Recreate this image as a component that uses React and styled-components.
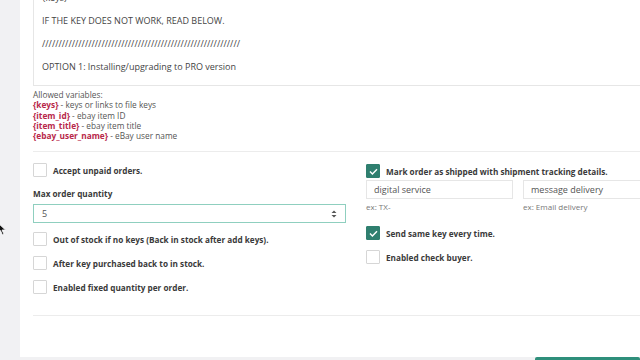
import React from 'react'
import styled, { createGlobalStyle } from 'styled-components'

const GlobalStyle = createGlobalStyle`
  html, body {
    margin: 0;
    padding: 0;
    overflow: hidden;
    background: #f1f1f3;
    font-family: "Open Sans", "Liberation Sans", sans-serif;
  }
`

const Page = styled.div`
  position: relative;
  width: 640px;
  height: 360px;
  overflow: hidden;
  padding-left: 20px;
  box-sizing: border-box;
`

const Panel = styled.div`
  width: 680px;
  height: 357px;
  background: #fff;
  padding: 0 0 0 13px;
  box-sizing: border-box;
  overflow: hidden;
`

const Footer = styled.div`
  display: flex;
  padding-left: 515px;
`

const SaveButton = styled.div`
  width: 130px;
  height: 20px;
  background: #2f8f7b;
  border-radius: 2px;
`

const Textarea = styled.div`
  margin-top: -17px;
  border: 1px solid #e6e6e6;
  padding: 8px 8px 12.5px;
  font-size: 9px;
  line-height: 11.5px;
  color: #444;
  white-space: pre;
`

const Vars = styled.div`
  margin-top: 4px;
  font-size: 8.3px;
  line-height: 10.3px;
  color: #555;
`

const Var = styled.span`
  color: #b8284a;
  font-weight: 700;
`

const Rule = styled.div`
  height: 1px;
  background: #ececec;
  margin: ${p => p.$m || '10px 0'};
`

const Columns = styled.div`
  display: grid;
  grid-template-columns: 313px 322px;
  column-gap: 20px;
`

const Col = styled.div`
  display: flex;
  flex-direction: column;
`

const CheckRow = styled.label`
  display: flex;
  align-items: center;
  gap: 6px;
  height: 14px;
  margin-top: ${p => p.$mt || 0}px;
  font-size: 8.2px;
  font-weight: 700;
  color: #3a3a3a;
  white-space: nowrap;
`

const Box = styled.span`
  width: 14px;
  height: 14px;
  box-sizing: border-box;
  border: 1px solid #d6d6d6;
  border-radius: 1px;
  background: ${p => (p.$on ? '#2f7f6f' : '#fff')};
  border-color: ${p => (p.$on ? '#2f7f6f' : '#d6d6d6')};
  display: flex;
  align-items: center;
  justify-content: center;
  flex: none;
`

const FieldLabel = styled.div`
  margin-top: 12px;
  font-size: 8.2px;
  font-weight: 700;
  color: #3a3a3a;
  line-height: 10px;
`

const NumberInput = styled.div`
  margin-top: 5px;
  height: 19px;
  border: 1px solid #8fcfbf;
  box-sizing: border-box;
  display: flex;
  align-items: center;
  justify-content: space-between;
  padding: 0 8px 0 8px;
  font-size: 9px;
  color: #555;
`

const Spinner = styled.svg`
  width: 6px;
  height: 8px;
`

const InputPair = styled.div`
  display: flex;
  gap: 10px;
  margin-top: 2px;
`

const Field = styled.div`
  width: 147px;
  display: flex;
  flex-direction: column;
`

const TextInput = styled.div`
  height: 19px;
  border: 1px solid #e6e6e6;
  box-sizing: border-box;
  display: flex;
  align-items: center;
  padding-left: 7px;
  font-size: 9px;
  color: #555;
`

const Hint = styled.div`
  margin-top: 3px;
  font-size: 8px;
  line-height: 10px;
  color: #777;
`

const Cursor = styled.svg`
  position: absolute;
  left: -3px;
  top: 222px;
  width: 10px;
  height: 14px;
`

const Check = () => (
  <svg width="9" height="7" viewBox="0 0 9 7">
    <path d="M1 3.6 L3.4 6 L8 1.2" fill="none" stroke="#fff" strokeWidth="1.4" />
  </svg>
)

const Checkbox = ({ on, children, mt }) => (
  <CheckRow $mt={mt}>
    <Box $on={on}>{on && <Check />}</Box>
    {children}
  </CheckRow>
)

const text = `{keys}

IF THE KEY DOES NOT WORK, READ BELOW.

${'/'.repeat(60)}

OPTION 1: Installing/upgrading to PRO version
`

export default function App() {
  return (
    <Page>
      <GlobalStyle />
      <Panel>
        <Textarea>{text}</Textarea>
        <Vars>
          Allowed variables:<br />
          <Var>{'{keys}'}</Var> - keys or links to file keys<br />
          <Var>{'{item_id}'}</Var> - ebay item ID<br />
          <Var>{'{item_title}'}</Var> - ebay item title<br />
          <Var>{'{ebay_user_name}'}</Var> - eBay user name
        </Vars>
        <Rule $m="10px 0 11px" />
        <Columns>
          <Col>
            <Checkbox>Accept unpaid orders.</Checkbox>
            <FieldLabel>Max order quantity</FieldLabel>
            <NumberInput>
              5
              <Spinner viewBox="0 0 6 8">
                <path d="M3 0.5 L5.5 3 H0.5 Z M3 7.5 L5.5 5 H0.5 Z" fill="#555" />
              </Spinner>
            </NumberInput>
            <Checkbox mt={9}>Out of stock if no keys (Back in stock after add keys).</Checkbox>
            <Checkbox mt={10}>After key purchased back to in stock.</Checkbox>
            <Checkbox mt={10}>Enabled fixed quantity per order.</Checkbox>
          </Col>
          <Col>
            <Checkbox on mt={1}>Mark order as shipped with shipment tracking details.</Checkbox>
            <InputPair>
              <Field>
                <TextInput>digital service</TextInput>
                <Hint>ex: TX-</Hint>
              </Field>
              <Field>
                <TextInput>message delivery</TextInput>
                <Hint>ex: Email delivery</Hint>
              </Field>
            </InputPair>
            <Checkbox on mt={14}>Send same key every time.</Checkbox>
            <Checkbox mt={10}>Enabled check buyer.</Checkbox>
          </Col>
        </Columns>
        <Rule $m="21px 0 0" />
      </Panel>
      <Footer>
        <SaveButton />
      </Footer>
      <Cursor viewBox="0 0 10 14">
        <path d="M1 1 L1 11 L3.5 8.5 L5.5 13 L7 12.3 L5 8 L8.5 8 Z" fill="#111" stroke="#fff" strokeWidth="0.8" />
      </Cursor>
    </Page>
  )
}
